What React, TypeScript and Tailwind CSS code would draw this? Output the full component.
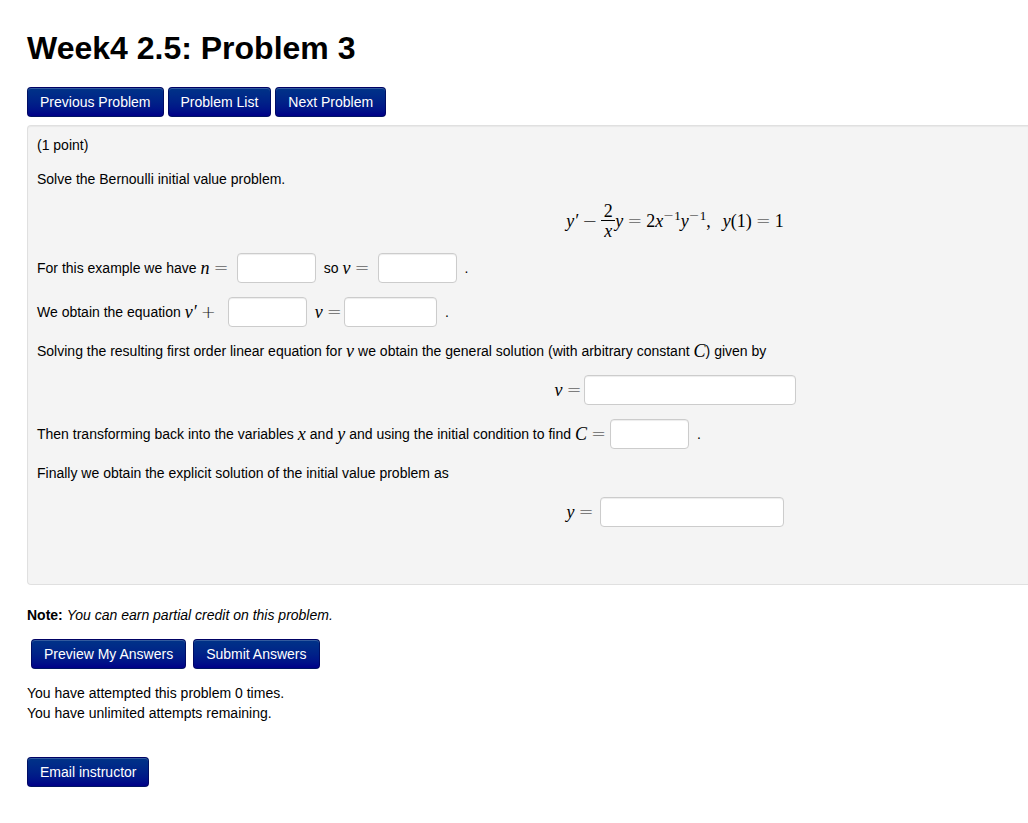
import { ButtonHTMLAttributes, InputHTMLAttributes, ReactNode } from "react";
import clsx from "clsx";

function Button({
  className,
  ...props
}: ButtonHTMLAttributes<HTMLButtonElement>) {
  return (
    <button
      type="button"
      className={clsx(
        "h-[30px] rounded border border-[#00004d]/60 bg-linear-to-b from-[#003388] to-[#000088] px-3 text-sm leading-5 text-white shadow-[inset_0_1px_0_rgba(255,255,255,0.2)] hover:from-[#000088]",
        className,
      )}
      {...props}
    />
  );
}

function AnswerInput({
  className,
  ...props
}: InputHTMLAttributes<HTMLInputElement>) {
  return (
    <input
      type="text"
      autoComplete="off"
      className={clsx(
        "h-[30px] rounded border border-[#cccccc] bg-white px-1.5 text-sm shadow-[inset_0_1px_1px_rgba(0,0,0,0.075)]",
        className,
      )}
      {...props}
    />
  );
}

function Var({ children }: { children: ReactNode }) {
  return (
    <i className="font-['Liberation_Serif',serif] text-[18px] leading-5">
      {children}
    </i>
  );
}

function Num({ children }: { children: ReactNode }) {
  return (
    <span className="font-['Liberation_Serif',serif] text-[18px] leading-5">
      {children}
    </span>
  );
}

function Op({ children }: { children: ReactNode }) {
  return (
    <span className="font-['DejaVu_Sans',sans-serif] text-[18px] leading-5 font-extralight text-[#222222]">
      {children}
    </span>
  );
}

function Exponent({ children }: { children: ReactNode }) {
  return (
    <sup className="top-0 mb-2.5 flex items-center font-['Liberation_Serif',serif] text-[13px] leading-3">
      <span className="font-['DejaVu_Sans',sans-serif] font-extralight text-[#222222]">
        −
      </span>
      {children}
    </sup>
  );
}

function Equation() {
  return (
    <div className="flex h-9 items-center">
      <Var>y′</Var>
      <span className="mx-1 flex">
        <Op>−</Op>
      </span>
      <span className="flex flex-col items-center">
        <span className="font-['Liberation_Serif',serif] text-[18px] leading-[18px]">
          2
        </span>
        <span className="h-px w-3.5 bg-black" />
        <i className="font-['Liberation_Serif',serif] text-[18px] leading-5">
          x
        </i>
      </span>
      <Var>y</Var>
      <span className="mx-1 flex">
        <Op>=</Op>
      </span>
      <Num>2</Num>
      <Var>x</Var>
      <Exponent>1</Exponent>
      <Var>y</Var>
      <Exponent>1</Exponent>
      <Num>,</Num>
      <span className="ml-3 flex">
        <Var>y</Var>
        <Num>(1)</Num>
      </span>
      <span className="mx-1 flex">
        <Op>=</Op>
      </span>
      <Num>1</Num>
    </div>
  );
}

export default function App() {
  return (
    <main className="overflow-x-hidden bg-white pt-7 pb-9 pl-[27px] font-['Liberation_Sans',Arial,sans-serif] text-sm leading-5 text-black">
      <h1 className="text-[32px] leading-10 font-bold">Week4 2.5: Problem 3</h1>

      <nav className="mt-[19px] flex gap-1">
        <Button>Previous Problem</Button>
        <Button>Problem List</Button>
        <Button>Next Problem</Button>
      </nav>

      <form>
        <section className="mt-2 flex flex-col gap-3.5 rounded-l border border-r-0 border-[#e0e0e0] bg-[#f4f4f4] pt-[9px] pb-[57px] pl-[9px] shadow-[inset_0_1px_1px_rgba(0,0,0,0.05)]">
          <p>(1 point)</p>
          <p>Solve the Bernoulli initial value problem.</p>

          <div className="flex justify-center pl-[285px]">
            <Equation />
          </div>

          <div className="flex items-center gap-2">
            <label htmlFor="n" className="flex items-center gap-1">
              For this example we have <Var>n</Var> <Op>=</Op>
            </label>
            <AnswerInput id="n" className="w-[79px]" />
            <label htmlFor="v" className="flex items-center gap-1">
              so <Var>v</Var> <Op>=</Op>
            </label>
            <AnswerInput id="v" className="w-[79px]" />
            <span>.</span>
          </div>

          <div className="flex items-center gap-2">
            <label htmlFor="coefficient" className="flex items-center gap-1">
              We obtain the equation <Var>v′</Var> <Op>+</Op>
            </label>
            <AnswerInput id="coefficient" className="ml-1 w-[79px]" />
            <span className="flex items-center gap-0.5">
              <label htmlFor="rhs" className="flex items-center gap-1">
                <Var>v</Var> <Op>=</Op>
              </label>
              <AnswerInput id="rhs" className="w-[93px]" />
            </span>
            <span>.</span>
          </div>

          <p className="flex items-center gap-1">
            Solving the resulting first order linear equation for <Var>v</Var>{" "}
            we obtain the general solution (with arbitrary constant{" "}
            <span className="flex items-center">
              <Var>C</Var>) given by
            </span>
          </p>

          <div className="flex items-center justify-center gap-0.5 pl-[285px]">
            <label htmlFor="general" className="flex items-center gap-1">
              <Var>v</Var> <Op>=</Op>
            </label>
            <AnswerInput id="general" className="w-[212px]" />
          </div>

          <div className="flex items-center gap-2">
            <span className="flex items-center gap-1">
              <label htmlFor="constant" className="flex items-center gap-1">
                Then transforming back into the variables <Var>x</Var> and{" "}
                <Var>y</Var> and using the initial condition to find{" "}
                <Var>C</Var> <Op>=</Op>
              </label>
              <AnswerInput id="constant" className="w-[79px]" />
            </span>
            <span>.</span>
          </div>

          <p>
            Finally we obtain the explicit solution of the initial value problem
            as
          </p>

          <div className="flex items-center justify-center gap-1.5 pl-[285px]">
            <label htmlFor="explicit" className="flex items-center gap-1">
              <Var>y</Var> <Op>=</Op>
            </label>
            <AnswerInput id="explicit" className="w-[184px]" />
          </div>
        </section>

        <p className="mt-5">
          <b>Note:</b> <i>You can earn partial credit on this problem.</i>
        </p>

        <div className="mt-3.5 ml-1 flex gap-[7px]">
          <Button>Preview My Answers</Button>
          <Button type="submit">Submit Answers</Button>
        </div>
      </form>

      <p className="mt-3.5">
        You have attempted this problem 0 times.
        <br />
        You have unlimited attempts remaining.
      </p>

      <Button className="mt-[34px]">Email instructor</Button>
    </main>
  );
}
